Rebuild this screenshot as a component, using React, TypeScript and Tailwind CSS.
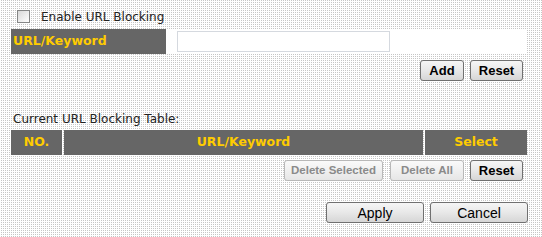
import React, { useState } from 'react';

const btn =
  'h-[21px] rounded-[3px] border border-[#707070] bg-linear-to-b from-[#f6f6f6] via-[#e8e8e8] to-[#d6d6d6] text-black font-["Liberation_Sans",Arial,sans-serif] leading-none';
const btnOff =
  'h-[21px] rounded-[3px] border border-[#b8b8b8] bg-linear-to-b from-[#fafafa] to-[#e6e6e6] text-[#8a8a8a] font-["Liberation_Sans",Arial,sans-serif] font-bold text-[11.5px] leading-none';

export default function App() {
  const [enabled, setEnabled] = useState(false);
  const [keyword, setKeyword] = useState('');

  return (
    <div className='w-[542px] h-[237px] overflow-hidden bg-[conic-gradient(#c6c6c6_25%,#ffffff_0)] bg-[length:2px_2px] font-["DejaVu_Sans",Verdana,sans-serif] text-[#222] pl-[11px] pr-[15px] pt-[10px]'>
      <label className="flex items-center h-[13px] pl-[6px] gap-[11px] text-[12px] cursor-pointer" onClick={() => setEnabled(!enabled)}>
        <span className="w-[13px] h-[13px] border border-[#858686] bg-linear-to-br from-[#d8d8d8] to-[#ffffff] flex items-center justify-center text-[10px] leading-none">
          {enabled ? '✓' : ''}
        </span>
        <span>Enable URL Blocking</span>
      </label>

      <div className="mt-[6px] flex h-[25px]">
        <div className="w-[155px] bg-[#666666] text-[#ffcc00] font-bold text-[12.5px] flex items-center pl-[2px]">URL/Keyword</div>
        <div className="flex-1 bg-white flex items-center pl-[11px]">
          <input
            value={keyword}
            onChange={(e) => setKeyword(e.target.value)}
            className="w-[213px] h-[21px] border border-[#d5d9df] bg-white outline-none px-1 text-[12px]"
          />
        </div>
      </div>

      <div className="mt-[6px] flex justify-end gap-[6px] pr-[4px]">
        <button className={`${btn} w-[44px] font-bold text-[13px]`}>Add</button>
        <button className={`${btn} w-[53px] font-bold text-[13px]`}>Reset</button>
      </div>

      <div className="mt-[31px] pl-[2px] text-[12px] leading-[14px]">Current URL Blocking Table:</div>

      <div className="mt-[4px] flex h-[25px] gap-[2px] text-[#ffcc00] font-bold text-[12.5px]">
        <div className="w-[51px] bg-[#666666] flex items-center justify-center">NO.</div>
        <div className="flex-1 bg-[#666666] flex items-center justify-center">URL/Keyword</div>
        <div className="w-[102px] bg-[#666666] flex items-center justify-center">Select</div>
      </div>

      <div className="mt-[5px] flex justify-end pr-[4px]">
        <button disabled className={`${btnOff} w-[99px]`}>Delete Selected</button>
        <button disabled className={`${btnOff} w-[74px] ml-[7px]`}>Delete All</button>
        <button className={`${btn} w-[53px] ml-[6px] font-bold text-[13px]`}>Reset</button>
      </div>

      <div className="mt-[21px] flex justify-end gap-[6px] mr-[-1px]">
        <button className={`${btn} w-[98px] text-[14px]`}>Apply</button>
        <button className={`${btn} w-[98px] text-[14px]`}>Cancel</button>
      </div>
    </div>
  );
}
